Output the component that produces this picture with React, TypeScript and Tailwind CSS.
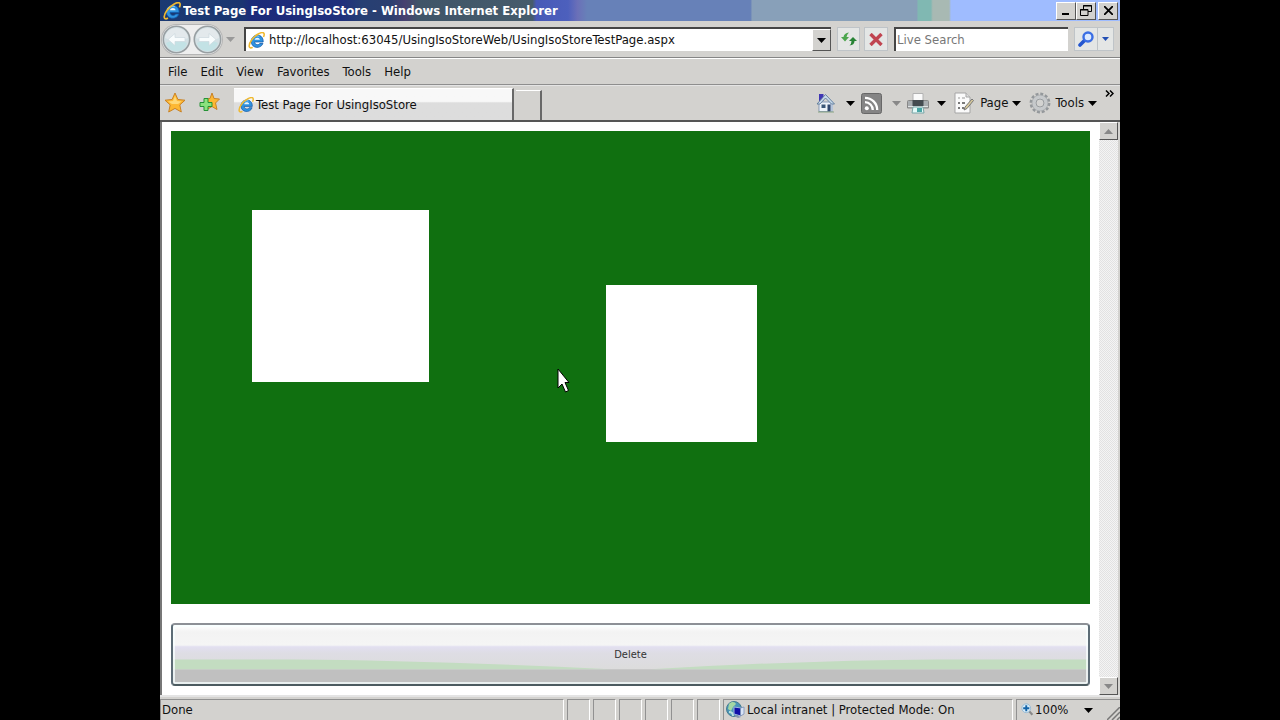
import type { ReactNode } from "react";

function IeLogo({ size = 16 }: { size?: number }) {
  return (
    <svg width={size} height={size} viewBox="0 0 16 16" className="shrink-0" aria-hidden="true">
      <path d="M14.300 9.400H6.200c.2 3 4.300 3.200 5 1.300h2.900c-1.900 5.800-11.300 4.800-11.100-2C3.200 1.200 14.800.6 14.300 9.400Z" fill="#2f93e0" stroke="#1257a8" strokeWidth=".7" />
      <path d="M6.200 7.300h5c-.3-2.600-4.600-2.600-5 0Z" fill="#eaf6ff" />
      <path d="M3.800 6.500C5 4 8 3.200 10.500 4" fill="none" stroke="#8fd0f5" strokeWidth="1" />
      <path d="M4.400 14.300C.6 16.600-.2 12.400 3.600 7.300 7.200 2.400 13.300-.7 14.900 1.100c.6.800.4 2-.3 3.600" fill="none" stroke="#efb930" strokeWidth="1.500" />
    </svg>
  );
}

function Caret({ className = "text-black" }: { className?: string }) {
  return (
    <svg width="9" height="5" viewBox="0 0 9 5" className={`shrink-0 ${className}`} aria-hidden="true">
      <path d="M0 0h9L4.500 5Z" fill="currentColor" />
    </svg>
  );
}

function Star({ plus = false }: { plus?: boolean }) {
  return (
    <svg width="22" height="22" viewBox="0 0 22 22" aria-hidden="true">
      <path
        d={plus ? "m14 1 2 5.500 5.500.5-4 4 1.500 6.500-5-3-5 3 1-6.500-4-4 6-.5Z" : "m11 1 2.900 6.500 7.100.7-5.200 4.700 1.500 7.100-6.300-3.600L4.700 20l1.500-7.100L1 8.200l7.100-.7Z"}
        fill="#fdb833"
        stroke="#c98226"
        strokeLinejoin="round"
      />
      {!plus && <path d="m11 4 2 5 4.500.5L14 12H8L4 9.500 9 9Z" fill="#ffd978" />}
      {plus && <path d="M6 6.500h4v4h4v4h-4v4H6v-4H2v-4h4Z" fill="#8be27d" stroke="#259235" />}
    </svg>
  );
}

function NavCircle({ flip = false }: { flip?: boolean }) {
  return (
    <svg width="29" height="29" viewBox="0 0 29 29" className={flip ? "-scale-x-100" : ""} aria-hidden="true">
      <circle cx="14.500" cy="14.500" r="13.200" fill="#d3e0e4" stroke="#989fa2" strokeWidth="1.600" />
      <path d="M3 13C4-.5 25-.5 26 13c-6 3-17 3-23 0Z" fill="#e3e9ec" />
      <path d="M4 18c3 11 18 11 21 0-6-3-15-3-21 0Z" fill="#c3e2e5" />
      <path d="m6 14.500 7-6v4h10v4H13v4Z" fill="#f8fcfd" stroke="#ccd9de" strokeWidth=".7" />
    </svg>
  );
}

function HomeIcon() {
  return (
    <svg width="20" height="20" viewBox="0 0 20 20" aria-hidden="true">
      <path d="M3 1h4.500v7H3Z" fill="#3f36b4" />
      <path d="M3 9h13.500v9.500H3Z" fill="#eef3fa" stroke="#7087a8" strokeWidth=".8" />
      <path d="M14 8h3v10.500h-3Z" fill="#b5c4da" />
      <path d="m1 11 8.500-9.500 9 9.500h-3L9.500 5 4 11Z" fill="#c9dbea" stroke="#5c7898" strokeWidth=".9" />
      <path d="M5.500 11.500h4V15h-4Z" fill="#3c5878" />
      <path d="M11.500 11.500h3v7h-3Z" fill="#31486f" />
      <path d="M2 19h16" stroke="#8aa583" />
    </svg>
  );
}

function FeedIcon() {
  return (
    <svg width="21" height="21" viewBox="0 0 21 21" aria-hidden="true">
      <rect x=".5" y=".5" width="20" height="20" rx="2" fill="#858585" stroke="#686868" />
      <circle cx="5.800" cy="15.300" r="2" fill="#fff" />
      <path d="M4 9.200a7.800 7.800 0 0 1 7.800 7.800M4 4.800A12.200 12.200 0 0 1 16.200 17" fill="none" stroke="#fff" strokeWidth="2.300" />
    </svg>
  );
}

function PrinterIcon() {
  return (
    <svg width="22" height="21" viewBox="0 0 22 21" aria-hidden="true">
      <path d="M6 .5h10v9H6Z" fill="#fafafa" stroke="#b2b2b2" />
      <path d="M.5 8.500q0-1 1-1h19q1 0 1 1V15H.5Z" fill="#a8adb0" stroke="#888" />
      <path d="M5.500 7h11v6h-11Z" fill="#444b50" />
      <path d="M1 13.500h20" stroke="#e1e4e5" />
      <path d="M6 14h10l1 6H5Z" fill="#e4faf8" stroke="#7ba5a7" />
      <path d="M10 15h5v4h-5Z" fill="#4aa5a5" />
    </svg>
  );
}

function PageIcon() {
  return (
    <svg width="20" height="22" viewBox="0 0 20 22" aria-hidden="true">
      <path d="M1 1h11l4 4v16H1Z" fill="#fafafa" stroke="#a5a5a5" />
      <path d="M12 1v4h4" fill="#ddd" stroke="#a5a5a5" />
      <path d="M4 6h2m2 0h3" stroke="#999" />
      <path d="M4 11h2m2 0h3M4 16h2m2 0h2" stroke="#4f4f4f" strokeWidth="1.500" />
      <path d="m10 18 1-3 7-8 1.500 1.500-6.500 8Z" fill="#d7c99b" stroke="#777" />
    </svg>
  );
}

function GearIcon() {
  return (
    <svg width="22" height="22" viewBox="0 0 22 22" aria-hidden="true">
      <circle cx="11" cy="11" r="9" fill="none" stroke="#94989b" strokeWidth="2.800" strokeDasharray="2.900 1.812" />
      <circle cx="11" cy="11" r="6.200" fill="#d4d6d8" stroke="#c6c9cb" strokeWidth="3.600" />
      <circle cx="11" cy="11" r="8" fill="none" stroke="#999da0" strokeWidth=".5" />
      <circle cx="11" cy="11" r="4" fill="#d3d3d1" stroke="#999da0" />
    </svg>
  );
}

function GlobeIcon() {
  return (
    <svg width="19" height="18" viewBox="0 0 19 18" aria-hidden="true">
      <circle cx="8" cy="8" r="7.500" fill="#4a94b8" stroke="#447c90" />
      <path d="M3 3c3-3 6-2 7 0L7 6 5 10 2 8Z" fill="#a4d7a4" />
      <path d="M3 11c3 0 4 2 4 4" fill="none" stroke="#b8e0da" strokeWidth="2" />
      <path d="m8 6 7 1v8l-7-2Z" fill="#1010a8" stroke="#9fb5e0" />
      <path d="m14.500 7 3.500-1v7l-3.500 2Z" fill="#d8e4f6" stroke="#6d85ae" strokeWidth=".7" />
      <path d="m10 14 5 2-3 1-4-2Z" fill="#8796ad" />
    </svg>
  );
}

function Magnifier({ size, plus = false }: { size: number; plus?: boolean }) {
  return (
    <svg width={size} height={size} viewBox="0 0 16 16" aria-hidden="true">
      {plus ? (
        <>
          <path d="m9 9 4 4.500" stroke="#888" strokeWidth="2.500" />
          <circle cx="6" cy="6" r="5" fill="#d8ecf8" stroke="#8fb6d2" />
          <path d="M6 2.500v7M2.500 6h7" stroke="#1464a8" strokeWidth="2.200" />
        </>
      ) : (
        <>
          <path d="M6.500 9.500 2 14" stroke="#2456cf" strokeWidth="3.600" strokeLinecap="round" />
          <circle cx="10" cy="6" r="4.500" fill="#dbe9ff" stroke="#3a6ee4" strokeWidth="2.400" />
        </>
      )}
    </svg>
  );
}

const raised = "border border-t-white border-l-white border-r-[#555] border-b-[#555] bg-[#d3d2cf]";

function CaptionButton({ label, children }: { label: string; children: ReactNode }) {
  return (
    <button type="button" aria-label={label} className={`flex h-[18px] w-5 items-center justify-center ${raised}`}>
      {children}
    </button>
  );
}

function TitleBar() {
  return (
    <header className="flex h-[21px] items-center bg-[linear-gradient(90deg,#1b3a72_0%,#1a3570_8.500%,#1b2a7a_9.500%,#20307c_19%,#263f73_21%,#2b3f70_24%,#47406f_25.500%,#3f5568_27%,#465c6c_38.800%,#4759b7_39.200%,#4d60bd_42.500%,#6b70b8_43.500%,#6781b8_44.500%,#6781b8_61.500%,#88a0b9_61.700%,#88a0b9_78.800%,#80b8b2_79%,#80b8b2_80.300%,#a8b9b3_80.500%,#a8b9b3_82.200%,#9fbcff_82.400%)] pr-0.5 pl-[3px]">
      <IeLogo size={18} />
      <h1 className="ml-0.5 flex-1 truncate text-[13px] font-bold text-white">Test Page For UsingIsoStore - Windows Internet Explorer</h1>
      <CaptionButton label="Minimize">
        <svg width="10" height="10" aria-hidden="true"><path d="M1 8h7" stroke="#000" strokeWidth="2" /></svg>
      </CaptionButton>
      <CaptionButton label="Restore">
        <svg width="12" height="11" fill="none" stroke="#000" aria-hidden="true">
          <path d="M3.500 4V.5h8v6H8M3 1h9M.5 4.500h7.500v6H.5ZM0 5h8" />
        </svg>
      </CaptionButton>
      <span className="ml-0.5 flex">
        <CaptionButton label="Close">
          <svg width="9" height="9" aria-hidden="true"><path d="m0 0 9 9M9 0 0 9" stroke="#000" strokeWidth="1.800" /></svg>
        </CaptionButton>
      </span>
    </header>
  );
}

function AddressBar() {
  const tool = "flex h-6 items-center justify-center border border-[#bfc4c8] bg-[#e4e6e5]";
  const field = "border-t-2 border-l-2 border-[#454545] bg-white";
  return (
    <div className="flex h-[37px] items-center border-b border-[#858585] pr-1.5 pl-0.5">
      <div className="flex rounded-full bg-[#eeeeee] shadow-[0_0_0_1px_#b5b5b5]">
        <button type="button" aria-label="Back"><NavCircle /></button>
        <button type="button" aria-label="Forward" className="ml-0.5"><NavCircle flip /></button>
      </div>
      <button type="button" aria-label="Recent pages" className="ml-0.5 flex w-3 justify-center"><Caret className="text-[#999]" /></button>
      <div className={`ml-2 flex h-6 flex-1 items-center pl-0.5 ${field}`}>
        <IeLogo size={17} />
        <input aria-label="Address" defaultValue="http://localhost:63045/UsingIsoStoreWeb/UsingIsoStoreTestPage.aspx" className="ml-1 min-w-0 flex-1 bg-transparent text-[13px] outline-none" />
        <button type="button" aria-label="Show addresses" className={`flex h-full w-[19px] items-center justify-center ${raised}`}><Caret /></button>
      </div>
      <button type="button" aria-label="Refresh" className={`ml-1.5 w-[23px] ${tool}`}>
        <svg width="16" height="14" viewBox="0 0 16 14" aria-hidden="true">
          <path d="M0 5 4 9.500 8 5H5.500Q6 2 8 .5 3 1 2.500 5Z" fill="#4ca64e" />
          <path d="m16 9-4-4-4 4h2.500q0 3-2 4.500 5-.5 5-4.500Z" fill="#278336" />
        </svg>
      </button>
      <button type="button" aria-label="Stop" className={`ml-1 w-6 ${tool}`}>
        <svg width="14" height="13" viewBox="0 0 14 13" aria-hidden="true"><path d="m1.500 1 11 11M12.500 1l-11 11" stroke="#c04450" strokeWidth="3.400" /></svg>
      </button>
      <input type="search" aria-label="Live Search" placeholder="Live Search" className={`ml-1.5 h-6 w-[174px] pb-0.5 pl-px text-[13px] outline-none placeholder:text-[#777] ${field}`} />
      <button type="button" aria-label="Search" className={`ml-1.5 w-6 ${tool}`}><Magnifier size={16} /></button>
      <button type="button" aria-label="Search options" className={`w-4 border-l-0 ${tool}`}>
        <svg width="7" height="4" aria-hidden="true"><path d="M0 0h7L3.500 4Z" fill="#234fb4" /></svg>
      </button>
    </div>
  );
}

function MenuBar() {
  return (
    <nav className="flex h-[27px] items-center gap-[13px] border-t border-b border-t-white border-b-[#8e8e8e] pl-2 text-[13px]">
      {["File", "Edit", "View", "Favorites", "Tools", "Help"].map((item) => (
        <button type="button" key={item}>{item}</button>
      ))}
    </nav>
  );
}

function CommandBar() {
  return (
    <div className="flex h-[37px] items-center border-t border-b-2 border-t-[#e4e4e4] border-b-[#555] pl-1 text-[13px]">
      <button type="button" aria-label="Favorites Center"><Star /></button>
      <button type="button" aria-label="Add to Favorites" className="ml-3"><Star plus /></button>
      <div className="ml-3.5 flex h-full flex-1 items-end">
        <button type="button" className="flex h-8 w-[280px] items-center border-t border-r-2 border-t-white border-r-[#686868] bg-linear-to-b from-[#f8f8f8] from-40% to-[#dddddd] to-45% pl-1">
          <IeLogo size={16} />
          <span className="ml-0.5">Test Page For UsingIsoStore</span>
        </button>
        <button type="button" aria-label="New Tab" className="ml-0.5 h-[30px] w-[26px] border-t border-r-2 border-t-white border-r-[#686868]" />
      </div>
      <div className="flex items-center">
        <button type="button" aria-label="Home" className="flex items-center gap-2.5"><HomeIcon /><Caret /></button>
        <button type="button" aria-label="Feeds" className="ml-1.5 flex items-center gap-2.5"><FeedIcon /><Caret className="text-[#888]" /></button>
        <button type="button" aria-label="Print" className="ml-1.5 flex items-center gap-2"><PrinterIcon /><Caret /></button>
        <button type="button" className="ml-2 flex items-center gap-1"><PageIcon /><span className="ml-0.5">Page</span><Caret /></button>
        <button type="button" className="ml-2 flex items-center gap-1"><GearIcon /><span>Tools</span><Caret /></button>
      </div>
      <button type="button" aria-label="More commands" className="mr-1.5 ml-2 self-start pt-1">
        <svg width="9" height="7" fill="none" stroke="#000" strokeWidth="1.500" aria-hidden="true"><path d="m1 .5 3 3-3 3M5 .5l3 3-3 3" /></svg>
      </button>
    </div>
  );
}

function ScrollBar() {
  const arrow = `flex h-[18px] w-full items-center justify-center ${raised}`;
  return (
    <div className="mr-0.5 flex w-[19px] flex-col justify-between bg-[#ebebeb] bg-[repeating-conic-gradient(#e2e2e2_0_25%,#f4f4f4_0_50%)] bg-size-[2px_2px]">
      <button type="button" aria-label="Scroll up" className={arrow}><Caret className="rotate-180 text-[#888]" /></button>
      <button type="button" aria-label="Scroll down" className={arrow}><Caret className="text-[#888]" /></button>
    </div>
  );
}

function DeleteButton() {
  return (
    <button type="button" className="relative mt-[19px] h-[63px] w-full overflow-hidden rounded-[4px] border-2 border-t-[#8d9096] border-r-[#5d6c76] border-b-[#4c5b60] border-l-[#5d6c76] bg-[linear-gradient(180deg,#ffffff_0%,#f3f3f3_12%,#f5f5f5_34%,#e2dff0_37%,#dedde4_48%,#dcdcdc_74%,#c0c0c0_76%,#c0c0c0_100%)] text-[11px] text-[#333]">
      <svg className="absolute inset-0 h-full w-full" viewBox="0 0 920 60" preserveAspectRatio="none" aria-hidden="true">
        <path d="M0 35h120Q260 36 440 45H0ZM920 35H770Q630 36 480 45h440Z" fill="#c3dcc1" />
        <path d="M1 1h918v58H1Z" fill="none" stroke="#f8ffff" strokeWidth="1.500" />
      </svg>
      <span className="relative">Delete</span>
    </button>
  );
}

function StatusBar() {
  const cell = "h-[21px] border-t border-l border-[#919191]";
  return (
    <footer className="flex h-[25px] items-end gap-[3px] border-t-2 border-[#e4e4e4] text-[13px]">
      <div className={`flex flex-1 items-center border-r border-r-white pl-px ${cell}`}>Done</div>
      {[0, 1, 2, 3, 4, 5].map((n) => (
        <div key={n} className={`w-[23px] border-r border-r-white ${cell}`} />
      ))}
      <div className={`flex w-[290px] items-center gap-0.5 border-r border-r-white pl-0.5 ${cell}`}>
        <GlobeIcon />
        <span className="whitespace-nowrap">Local intranet | Protected Mode: On</span>
      </div>
      <div className={`flex w-[104px] items-center pl-1 ${cell}`}>
        <button type="button" aria-label="Zoom level 100%" className="flex items-center"><Magnifier size={14} plus /><span>100%</span><span className="ml-4"><Caret /></span></button>
        <svg className="ml-auto self-end" width="13" height="13" aria-hidden="true">
          <path d="M0 13 13 0M5 13l8-8M10 13l3-3" stroke="#777" strokeWidth="1.500" />
        </svg>
      </div>
    </footer>
  );
}

export default function App() {
  return (
    <div className="flex min-h-screen bg-black px-[12.5%] font-['DejaVu_Sans_Condensed','DejaVu_Sans',sans-serif] leading-4 text-[#111]">
      <div className="flex min-w-0 flex-1 flex-col bg-[#d3d2cf]">
        <TitleBar />
        <AddressBar />
        <MenuBar />
        <CommandBar />
        <div className="flex flex-1 border-l-2 border-[#777]">
          <main className="flex flex-1 flex-col bg-white px-[9px] py-[9px]">
            <div className="relative flex-1 bg-[#107010]">
              <div className="absolute top-[79px] left-[81px] h-[172px] w-[177px] bg-white" />
              <div className="absolute top-[154px] left-[435px] h-[157px] w-[151px] bg-white" />
              <svg className="absolute top-[237px] left-[386px]" width="14" height="26" viewBox="0 0 14 26" aria-hidden="true">
                <path d="M1 1v19l4-4 3.500 8 3-1.500-3.500-8h4Z" fill="#fff" stroke="#000" />
              </svg>
            </div>
            <DeleteButton />
          </main>
          <ScrollBar />
        </div>
        <StatusBar />
      </div>
    </div>
  );
}
